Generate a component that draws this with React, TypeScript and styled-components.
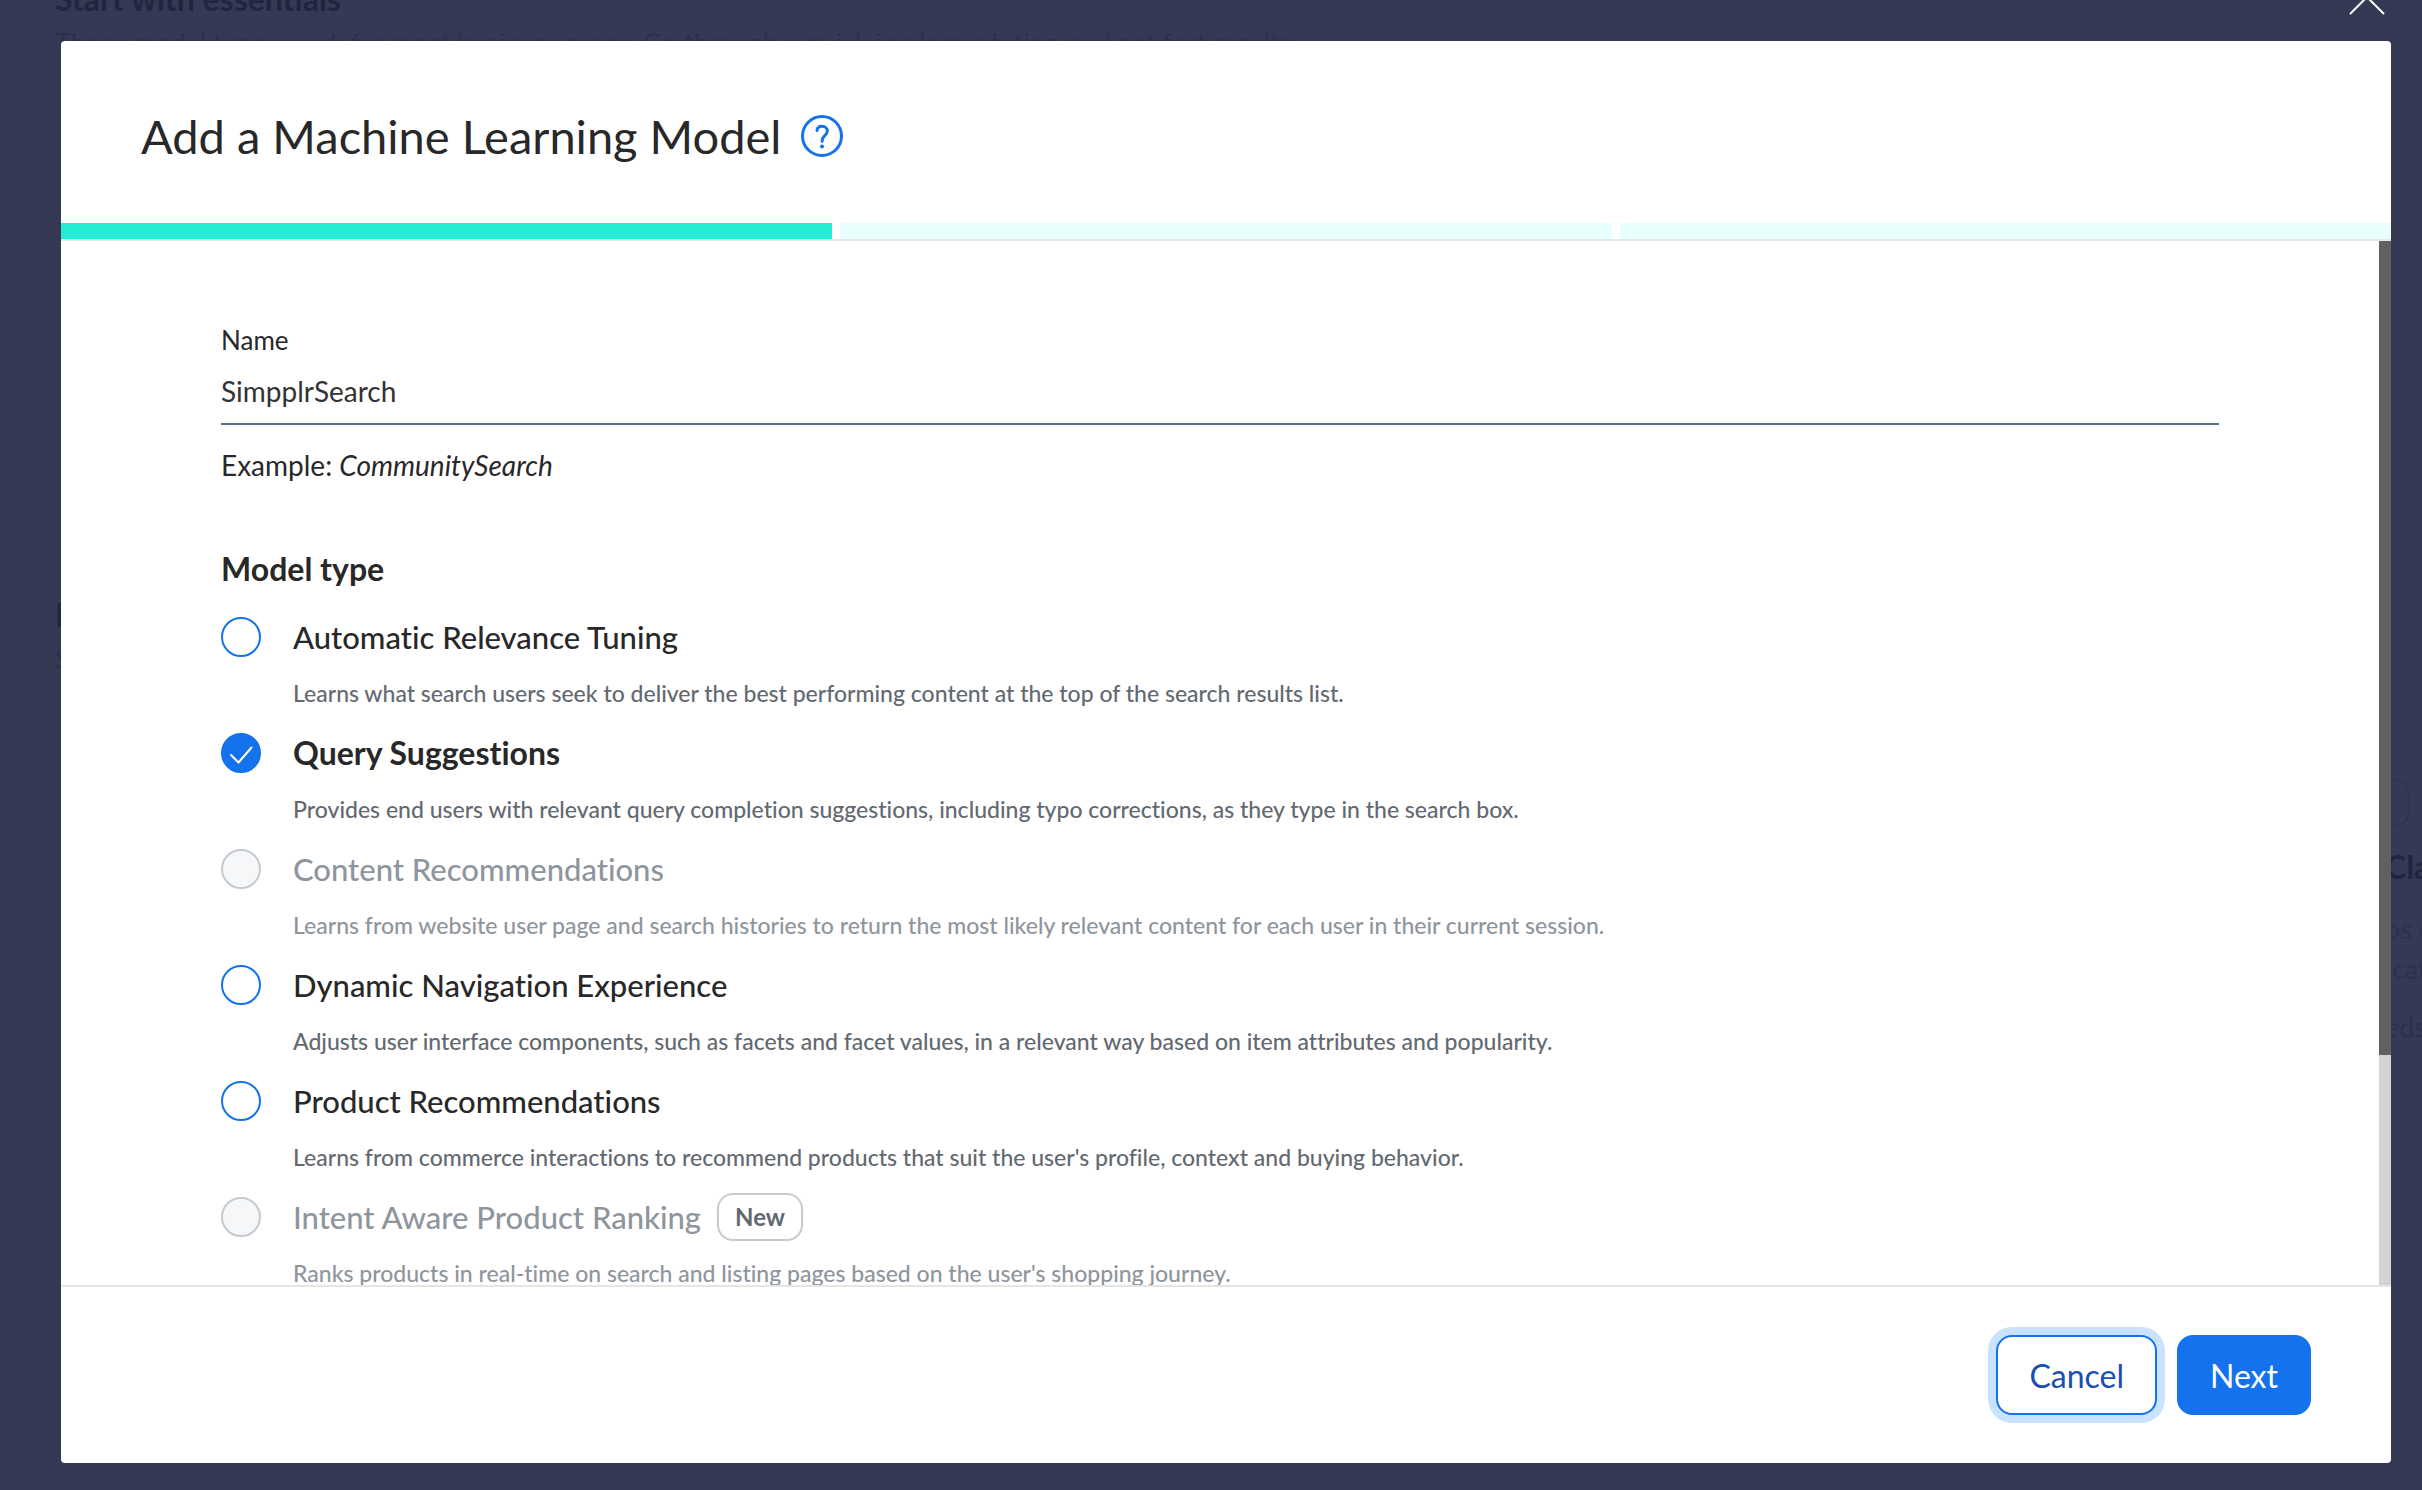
import React, { useState } from "react";
import styled, { createGlobalStyle } from "styled-components";

const GlobalStyle = createGlobalStyle`
  * { box-sizing: border-box; }
  html, body, #root { height: 100%; }
  body {
    margin: 0;
    overflow: hidden;
    background: #323a54;
    color: #282829;
    font-family: Lato, "Open Sans", sans-serif;
    font-variant-ligatures: none;
  }
  h1, h2, h3, p, fieldset, legend { margin: 0; padding: 0; border: 0; }
  button, input { font-family: inherit; }
`;

const Page = styled.div`
  position: relative;
  height: 100%;
  overflow: hidden;
  background: #353954;
`;

/* Catalogue page dimmed by the modal backdrop */
const Catalogue = styled.div`
  position: absolute;
  inset: 0;
  padding-left: 55px;
  overflow: hidden;
  white-space: nowrap;
  color: #2a3150;
`;

const DimHeading = styled.h2`
  margin-bottom: 4px;
  color: #20263f;
  font-size: 32px;
  font-weight: 700;
  line-height: 40px;
`;

const DimText = styled.p`
  font-size: 27px;
  line-height: 40px;
`;

const DimSection = styled.section<{ $top: number }>`
  margin-top: ${(p) => p.$top}px;
`;

const CardGrid = styled.div`
  display: grid;
  grid-template-columns: repeat(3, 912px);
  gap: 40px;
  margin-top: 50px;
`;

const DimCard = styled.div`
  height: 900px;
  padding: 48px 0 0 424px;
  border: 2px solid #323a54;
  border-radius: 8px;
`;

const DimBadge = styled.span`
  display: block;
  width: 25px;
  height: 48px;
  margin-bottom: 20px;
  border: 2px solid #2d3551;
  border-left: 0;
  border-radius: 0 16px 16px 0;
`;

const DimGap = styled.div`
  height: 18px;
`;

const Overlay = styled.div`
  position: relative;
  display: flex;
  height: 100%;
  padding: 41px 31px 27px 61px;
`;

const CloseButton = styled.button`
  position: absolute;
  top: -24px;
  right: 34px;
  width: 42px;
  height: 42px;
  padding: 0;
  border: 0;
  background: none;
  color: #fff;
`;

const Dialog = styled.section`
  display: flex;
  flex: 1;
  flex-direction: column;
  min-width: 0;
  overflow: hidden;
  border-radius: 4px;
  background: #fff;
`;

const Header = styled.header`
  display: flex;
  align-items: center;
  gap: 20px;
  padding: 59px 80px 51px;
`;

const Title = styled.h1`
  font-size: 47px;
  font-weight: 400;
  line-height: 72px;
`;

const HelpButton = styled.button`
  display: flex;
  padding: 0;
  border: 0;
  background: none;
  color: #1372ec;
`;

const Progress = styled.div`
  display: flex;
  gap: 8px;
  border-bottom: 2px solid #e5e8e8;
`;

const Step = styled.div<{ $done?: boolean }>`
  flex: 1;
  height: 16px;
  background: ${(p) => (p.$done ? "#21eed4" : "#e8fffd")};
`;

const Body = styled.div`
  display: flex;
  flex: 1;
  min-height: 0;
`;

const Form = styled.form`
  flex: 1;
  min-width: 0;
  padding: 80px 160px;
  overflow-y: auto;
  scrollbar-width: none;
`;

const ScrollTrack = styled.div`
  width: 12px;
  background: #d3d3d3;
`;

const ScrollThumb = styled.div`
  height: 78%;
  background: #606060;
`;

const FieldLabel = styled.label`
  display: block;
  font-size: 26px;
  line-height: 38px;
`;

const TextInput = styled.input`
  display: block;
  width: 100%;
  height: 66px;
  padding: 0;
  border: 0;
  border-bottom: 2px solid #56708f;
  border-radius: 0;
  outline: 0;
  background: transparent;
  color: #333;
  font-size: 28px;
`;

const Hint = styled.p`
  margin-top: 20px;
  font-size: 28px;
  line-height: 40px;
`;

const Group = styled.fieldset`
  display: flex;
  flex-direction: column;
  gap: 20px;
  min-width: 0;
  margin-top: 64px;
`;

const GroupTitle = styled.legend`
  margin-bottom: 28px;
  font-size: 32px;
  font-weight: 700;
  line-height: 40px;
`;

const Option = styled.div`
  display: grid;
  grid-template-columns: 40px 1fr;
  gap: 16px 32px;
`;

const RadioCell = styled.span`
  display: grid;
  width: 40px;
  height: 40px;

  > * { grid-area: 1 / 1; }
  > svg { pointer-events: none; }
`;

const Radio = styled.input`
  width: 40px;
  height: 40px;
  margin: 0;
  appearance: none;
  border: 2px solid #1372ec;
  border-radius: 50%;
  background: #fff;

  &:checked { background: #1372ec; }
  &:disabled { border-color: #c5cad0; background: #f6f7f9; }
`;

const OptionHead = styled.div`
  display: flex;
  align-items: center;
  gap: 16px;
  height: 40px;
`;

const OptionLabel = styled.label<{ $selected: boolean; $disabled?: boolean }>`
  color: ${(p) => (p.$disabled ? "#8e959d" : "#282829")};
  font-size: ${(p) => (p.$selected ? 32 : 31)}px;
  font-weight: ${(p) => (p.$selected ? 700 : 500)};
  line-height: 40px;
`;

const OptionText = styled.p<{ $disabled?: boolean }>`
  grid-column: 2;
  color: ${(p) => (p.$disabled ? "#8e959d" : "#626971")};
  font-size: 23px;
  font-weight: 500;
  line-height: 40px;
`;

const Badge = styled.span`
  padding: 0 16px;
  border: 2px solid #c5cad0;
  border-radius: 16px;
  color: #626971;
  font-size: 24px;
  font-weight: 700;
  line-height: 44px;
`;

const Footer = styled.footer`
  display: flex;
  justify-content: flex-end;
  gap: 20px;
  padding: 48px 80px;
  border-top: 2px solid #e5e5e5;
`;

const Button = styled.button<{ $primary?: boolean }>`
  height: 80px;
  padding: 0 31px;
  border: 2px solid #1372ec;
  border-radius: 16px;
  outline: 0;
  background: ${(p) => (p.$primary ? "#1372ec" : "#fff")};
  box-shadow: ${(p) => (p.$primary ? "none" : "0 0 0 8px #c8e2ff")};
  color: ${(p) => (p.$primary ? "#fff" : "#1a4eb0")};
  font-size: 32px;
`;

type Model = { id: string; name: string; text: string; disabled?: boolean; isNew?: boolean };

const MODELS: Model[] = [
  { id: "art", name: "Automatic Relevance Tuning", text: "Learns what search users seek to deliver the best performing content at the top of the search results list." },
  { id: "qs", name: "Query Suggestions", text: "Provides end users with relevant query completion suggestions, including typo corrections, as they type in the search box." },
  { id: "cr", name: "Content Recommendations", text: "Learns from website user page and search histories to return the most likely relevant content for each user in their current session.", disabled: true },
  { id: "dne", name: "Dynamic Navigation Experience", text: "Adjusts user interface components, such as facets and facet values, in a relevant way based on item attributes and popularity." },
  { id: "pr", name: "Product Recommendations", text: "Learns from commerce interactions to recommend products that suit the user's profile, context and buying behavior." },
  { id: "iapr", name: "Intent Aware Product Ranking", text: "Ranks products in real-time on search and listing pages based on the user's shopping journey.", disabled: true, isNew: true },
];

const CheckIcon = () => (
  <svg width="40" height="40" viewBox="0 0 40 40" fill="none" stroke="#fff" strokeWidth="2" strokeLinecap="round" strokeLinejoin="round" aria-hidden="true">
    <path d="M10 22l7.500 7.500L30.500 14.500" />
  </svg>
);

const HelpIcon = () => (
  <svg width="42" height="42" viewBox="0 0 42 42" fill="none" stroke="currentColor" strokeLinecap="round" aria-hidden="true">
    <circle cx="21" cy="21" r="19.500" strokeWidth="3" />
    <path d="M16 15.500C16.300 12.700 18.400 11.300 21 11.300c3 0 5.300 1.800 5.300 4.700 0 2.500-1.500 3.700-3 5.200-1.500 1.400-2.200 2.500-2.200 5" strokeWidth="3" />
    <circle cx="21" cy="31.500" r="2" fill="currentColor" stroke="none" />
  </svg>
);

const CloseIcon = () => (
  <svg width="42" height="42" viewBox="0 0 42 42" stroke="currentColor" strokeWidth="2" aria-hidden="true">
    <path d="M4 4l34 34M38 4L4 38" />
  </svg>
);

export default function App() {
  const [name, setName] = useState("SimpplrSearch");
  const [selected, setSelected] = useState("qs");

  return (
    <Page>
      <GlobalStyle />
      <Catalogue aria-hidden="true">
        <DimSection $top={-21}>
          <DimHeading>Start with essentials</DimHeading>
          <DimText>These model types work for most business cases. Go through a quick implementation and get fast results.</DimText>
        </DimSection>
        <DimSection $top={532}>
          <DimHeading>E</DimHeading>
          <DimText>S</DimText>
        </DimSection>
        <CardGrid>
          <DimCard />
          <DimCard />
          <DimCard>
            <DimBadge />
            <DimHeading>Cla</DimHeading>
            <DimGap />
            <DimText>os o</DimText>
            <DimText>&nbsp;cat</DimText>
            <DimGap />
            <DimText>eds</DimText>
          </DimCard>
        </CardGrid>
      </Catalogue>

      <Overlay>
        <CloseButton type="button" aria-label="Close"><CloseIcon /></CloseButton>
        <Dialog role="dialog" aria-modal="true" aria-labelledby="dialog-title">
          <Header>
            <Title id="dialog-title">Add a Machine Learning Model</Title>
            <HelpButton type="button" aria-label="Help"><HelpIcon /></HelpButton>
          </Header>
          <Progress>
            <Step $done />
            <Step />
            <Step />
          </Progress>
          <Body>
            <Form id="model-form" onSubmit={(e) => e.preventDefault()}>
              <FieldLabel htmlFor="model-name">Name</FieldLabel>
              <TextInput id="model-name" type="text" value={name} onChange={(e) => setName(e.target.value)} />
              <Hint>Example: <em>CommunitySearch</em></Hint>
              <Group>
                <GroupTitle>Model type</GroupTitle>
                {MODELS.map((m) => (
                  <Option key={m.id}>
                    <RadioCell>
                      <Radio
                        type="radio"
                        name="model-type"
                        id={m.id}
                        checked={selected === m.id}
                        disabled={m.disabled}
                        onChange={() => setSelected(m.id)}
                      />
                      {selected === m.id && <CheckIcon />}
                    </RadioCell>
                    <OptionHead>
                      <OptionLabel htmlFor={m.id} $selected={selected === m.id} $disabled={m.disabled}>{m.name}</OptionLabel>
                      {m.isNew && <Badge>New</Badge>}
                    </OptionHead>
                    <OptionText $disabled={m.disabled}>{m.text}</OptionText>
                  </Option>
                ))}
              </Group>
            </Form>
            <ScrollTrack><ScrollThumb /></ScrollTrack>
          </Body>
          <Footer>
            <Button type="button">Cancel</Button>
            <Button type="submit" form="model-form" $primary>Next</Button>
          </Footer>
        </Dialog>
      </Overlay>
    </Page>
  );
}
